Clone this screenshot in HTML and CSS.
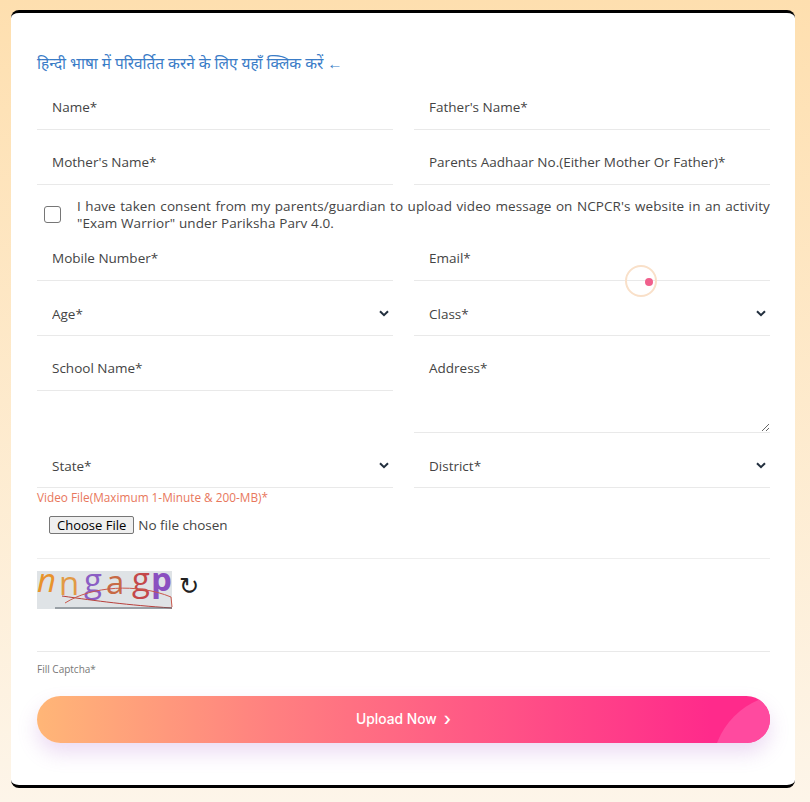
FILE: index.html
```html
<!DOCTYPE html>
<html lang="en">
<head>
<meta charset="UTF-8">
<title>Exam Warrior Upload</title>
<link rel="stylesheet" href="styles.css">
</head>

<body>
    <div class="card">
        <a class="lang-link" href="#">हिन्दी भाषा में परिवर्तित करने के लिए यहाँ क्लिक करें ←</a>

        <form>
            <div class="fields">
                <input class="control" type="text" placeholder="Name*">
                <input class="control" type="text" placeholder="Father's Name*">
                <input class="control" type="text" placeholder="Mother's Name*">
                <input class="control" type="text" placeholder="Parents Aadhaar No.(Either Mother Or Father)*">
            </div>

            <label class="consent">
                <input type="checkbox">
                <span>I have taken consent from my parents/guardian to upload video message on NCPCR's website in an activity "Exam Warrior" under Pariksha Parv 4.0.</span>
            </label>

            <div class="fields">
                <input class="control" type="text" placeholder="Mobile Number*">
                <div class="email-group">
                    <input class="control" type="email" placeholder="Email*">
                    <span class="cursor-ring"></span>
                    <span class="cursor-dot"></span>
                </div>
                <select class="control">
                    <option>Age*</option>
                </select>
                <select class="control">
                    <option>Class*</option>
                </select>
                <input class="control" type="text" placeholder="School Name*">
                <textarea class="control address" placeholder="Address*"></textarea>
                <select class="control">
                    <option>State*</option>
                </select>
                <select class="control">
                    <option>District*</option>
                </select>
            </div>

            <p class="file-label">Video File(Maximum 1-Minute &amp; 200-MB)*</p>
            <input class="file-input" type="file">

            <div class="captcha-row">
                <svg class="captcha" width="135" height="38" viewBox="0 0 135 38">
                    <rect width="135" height="38" fill="#dfe3e6"/>
                    <text x="0" y="21" class="cap-letter" font-style="italic" fill="#e8932c">n</text>
                    <text x="22" y="24" class="cap-letter" fill="#e29a45">n</text>
                    <text x="47" y="21" class="cap-letter" fill="#8b5ec4">g</text>
                    <text x="69" y="23" class="cap-letter" fill="#c76a45">a</text>
                    <text x="95" y="20" class="cap-letter" fill="#c4484a">g</text>
                    <text x="114" y="20" class="cap-letter" font-weight="700" fill="#8a4fc0">p</text>
                    <path d="M25 25 C60 30 90 34 135 37" stroke="#b8403c" fill="none"/>
                    <path d="M28 32 C55 15 100 12 134 26 L135 36" stroke="#c9584c" fill="none"/>
                    <path d="M18 37 H135" stroke="#555e66" stroke-width="1.2"/>
                </svg>
                <span class="refresh">↻</span>
            </div>

            <input class="control captcha-input" type="text">
            <p class="captcha-label">Fill Captcha*</p>

            <button class="upload" type="button">Upload Now <span class="upload-arrow">›</span></button>
        </form>
    </div>
</body>
</html>
```

FILE: styles.css
```css
* {
    box-sizing: border-box;
}

body {
    margin: 0;
    min-height: 802px;
    padding: 10px 15px 14px 11px;
    background: linear-gradient(180deg, #fedfaf 0%, #fdf5e9 100%);
    font-family: "Open Sans", "Noto Sans", sans-serif;
    font-size: 13.5px;
    color: #444;
}

.card {
    height: 778px;
    padding: 41px 25px 0 26px;
    background: white;
    border-top: 3px solid #000;
    border-bottom: 3px solid #000;
    border-radius: 8px;
}

.lang-link {
    display: block;
    height: 20px;
    line-height: 20px;
    font-size: 15.4px;
    color: #3a7cc7;
    text-decoration: none;
}

.fields {
    display: grid;
    grid-template-columns: 356px 356px;
    column-gap: 21px;
    row-gap: 11px;
    align-items: start;
}

.fields:first-of-type {
    margin-top: 12px;
}

.control {
    display: block;
    width: 100%;
    height: 44px;
    padding: 0 15px 2px;
    border: none;
    border-bottom: 1px solid #e9e9e9;
    outline: none;
    background: white;
    font-family: inherit;
    font-size: 13.5px;
    color: #444;
}

.control::placeholder {
    color: #444;
    opacity: 1;
}

select.control {
    appearance: none;
    padding-bottom: 0;
    background-image: url("data:image/svg+xml,%3Csvg xmlns='http://www.w3.org/2000/svg' width='10' height='7' viewBox='0 0 10 7'%3E%3Cpath d='M1 1.2l4 4 4-4' fill='none' stroke='%23222f3e' stroke-width='2'/%3E%3C/svg%3E");
    background-repeat: no-repeat;
    background-position: right 4px center;
}

.address {
    height: 86px;
    padding-top: 12px;
    resize: vertical;
}

.consent {
    display: flex;
    align-items: center;
    gap: 16px;
    height: 41px;
    margin-bottom: 11px;
    padding: 18px 0 0 7px;
    line-height: 17px;
    letter-spacing: 0.1px;
    text-align: justify;
}

.consent input {
    flex: none;
    width: 17px;
    height: 17px;
    margin: 0;
    appearance: none;
    background: white;
    border: 1px solid #767676;
    border-radius: 3px;
}

.email-group {
    position: relative;
}

.cursor-ring {
    position: absolute;
    left: 211px;
    top: 28px;
    width: 32px;
    height: 32px;
    border: 2px solid #f9e0c9;
    border-radius: 50%;
}

.cursor-dot {
    position: absolute;
    left: 231px;
    top: 41px;
    width: 8px;
    height: 8px;
    background: #f0608c;
    border-radius: 50%;
}

.file-label {
    margin: 1px 0 0;
    height: 17px;
    line-height: 17px;
    font-size: 11.8px;
    color: #e8775c;
}

.file-input {
    display: block;
    margin: 10px 0 0 12px;
    font-family: inherit;
    font-size: 13.5px;
    line-height: 18px;
}

.file-input::file-selector-button {
    height: 18px;
    margin-right: 4px;
    padding: 0 7px;
    border: 1px solid #767676;
    border-radius: 2px;
    background: #efefef;
    font-family: inherit;
    font-size: 13px;
    line-height: 16px;
}

.captcha-row {
    display: flex;
    align-items: center;
    gap: 7px;
    height: 52px;
    margin-top: 24px;
    padding-top: 12px;
    padding-bottom: 1px;
    border-top: 1px solid #eee;
}

.captcha {
    overflow: visible;
}

.cap-letter {
    font-family: "Open Sans", sans-serif;
    font-size: 33px;
}

.refresh {
    margin-bottom: 8px;
    font-family: "DejaVu Sans", sans-serif;
    font-size: 24px;
    line-height: 26px;
    color: #222;
}

.captcha-input {
    height: 42px;
    padding: 0;
}

.captcha-label {
    margin: 10px 0 0;
    font-size: 10px;
    line-height: 14px;
    color: #777;
}

.upload {
    position: relative;
    display: flex;
    align-items: center;
    justify-content: center;
    gap: 7px;
    width: 733px;
    height: 47px;
    margin-top: 20px;
    padding: 0 0 2px;
    overflow: hidden;
    border: none;
    border-radius: 24px;
    background: linear-gradient(90deg, #ffb677 0%, #ff8080 32%, #ff2a8b 92%);
    box-shadow: 0 10px 20px rgba(170, 90, 200, 0.22);
    font-family: "Inter", sans-serif;
    font-size: 13.8px;
    font-weight: 500;
    color: #fff;
}

.upload::after {
    content: "";
    position: absolute;
    left: 675px;
    top: -2px;
    width: 152px;
    height: 152px;
    background: #ff4a9f;
    border-radius: 50%;
}

.upload-arrow {
    font-size: 18px;
    line-height: 16px;
}
```
